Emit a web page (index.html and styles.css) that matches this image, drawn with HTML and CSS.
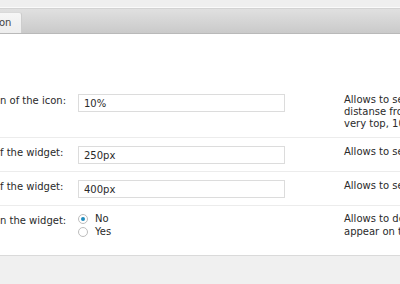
FILE: index.html
```html
<!DOCTYPE html>
<html>
<head>
<meta charset="utf-8">
<link rel="stylesheet" href="styles.css">
</head>
<body>
<div class="screen">
  <div class="topstrip"></div>
  <div class="tabbar">
    <div class="tab">on</div>
  </div>
  <div class="content">
    <div class="row">
      <div class="label">n of the icon:</div>
      <div class="field"><input class="text" type="text" value="10%"></div>
      <div class="desc">Allows to set the<br>distanse from the<br>very top, 10% by default.</div>
    </div>
    <div class="row">
      <div class="label">f the widget:</div>
      <div class="field"><input class="text" type="text" value="250px"></div>
      <div class="desc">Allows to set the width of the widget.</div>
    </div>
    <div class="row">
      <div class="label">f the widget:</div>
      <div class="field"><input class="text" type="text" value="400px"></div>
      <div class="desc">Allows to set the height of the widget.</div>
    </div>
    <div class="row">
      <div class="label">n the widget:</div>
      <div class="field">
        <div class="radios">
          <label class="radio"><input type="radio" name="show" checked><span>No</span></label>
          <label class="radio"><input type="radio" name="show"><span>Yes</span></label>
        </div>
      </div>
      <div class="desc">Allows to decide if the tab should<br>appear on the widget.</div>
    </div>
  </div>
  <div class="footer"></div>
</div>
</body>
</html>
```

FILE: styles.css
```css
html, body {
  margin: 0;
  padding: 0;
  width: 400px;
  height: 284px;
  overflow: hidden;
  background: #f0f0f0;
}

.screen {
  width: 400px;
  height: 284px;
  overflow: hidden;
  display: flex;
  flex-direction: column;
  font-family: "DejaVu Sans", "Liberation Sans", sans-serif;
  font-size: 10px;
  color: #2a2a2a;
}

.topstrip {
  height: 7px;
  background: #efefef;
  border-bottom: 1px solid #fafafa;
  flex: none;
}

.tabbar {
  flex: none;
  height: 24px;
  border-top: 1px solid #d3d3d3;
  border-bottom: 1px solid #b9b9b9;
  background: linear-gradient(#e0e0e0, #cacaca);
  display: flex;
  align-items: flex-end;
}

.tab {
  width: 22px;
  height: 21px;
  box-sizing: border-box;
  background: linear-gradient(#f6f6f6, #ededed);
  border-top: 1px solid #d9d9d9;
  border-right: 1px solid #cdcdcd;
  border-top-right-radius: 3px;
  color: #444;
  line-height: 20px;
  text-indent: -1px;
}

.content {
  flex: none;
  background: #fff;
  padding-top: 52px;
  border-bottom: 1px solid #dadada;
  width: 480px;
}

.row {
  display: grid;
  grid-template-columns: 78px 266px 136px;
  padding: 8px 0 7px;
  border-bottom: 1px solid #ececec;
  line-height: 12px;
}

.row:last-child {
  border-bottom: none;
  padding-bottom: 17px;
}

.label {
  padding-top: 1px;
  white-space: nowrap;
  overflow: hidden;
}

.desc {
  white-space: nowrap;
}

.row:last-child .desc {
  line-height: 13px;
  margin-top: -2px;
}

.text {
  display: block;
  box-sizing: border-box;
  width: 207px;
  height: 18px;
  margin: 0;
  padding: 0 5px;
  border: 1px solid #dcdcdc;
  border-radius: 0;
  background: #fff;
  font-family: inherit;
  font-size: 10px;
  color: #2a2a2a;
  outline: none;
}

.radios {
  display: flex;
  flex-direction: column;
  margin-top: -2px;
}

.radio {
  display: flex;
  align-items: center;
  gap: 7px;
  height: 13px;
}

.radio input {
  appearance: none;
  -webkit-appearance: none;
  margin: 0;
  width: 10px;
  height: 10px;
  box-sizing: border-box;
  border: 1px solid #bdbdbd;
  border-radius: 50%;
  background: #fff;
  display: grid;
  place-items: center;
  flex: none;
}

.radio input:checked::before {
  content: "";
  width: 4px;
  height: 4px;
  border-radius: 50%;
  background: #1e8cbe;
}

.footer {
  flex: 1;
  background: #f0f0f0;
}
```
